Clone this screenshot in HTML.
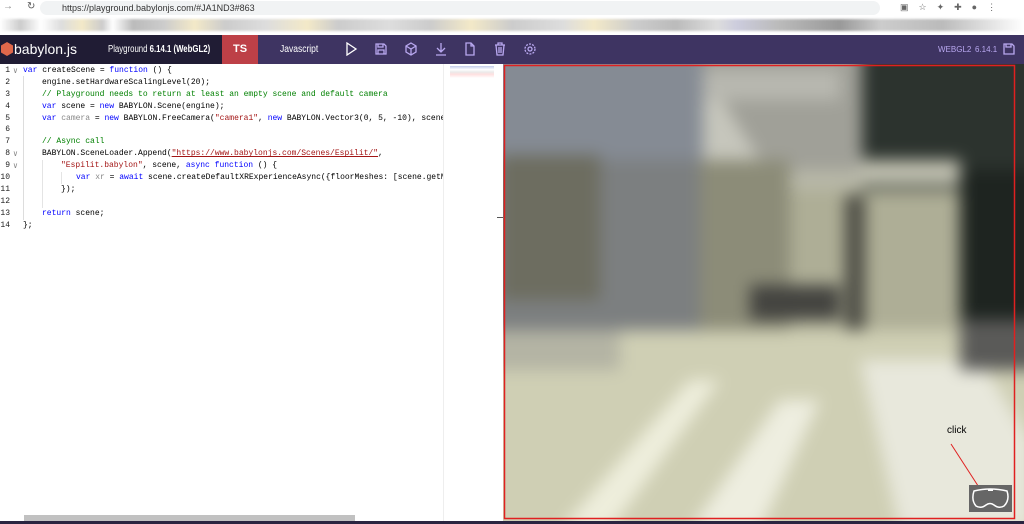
<!DOCTYPE html>
<html><head><meta charset="utf-8"><style>
*{margin:0;padding:0;box-sizing:border-box}
body{width:1024px;height:524px;overflow:hidden;background:#fff;font-family:"Liberation Sans",sans-serif;position:relative}
.abs{position:absolute}
#chrome{left:0;top:0;width:1024px;height:16px;background:#fff}
#url{left:40px;top:1px;width:840px;height:14px;background:#f1f3f4;border-radius:7px;font-size:9px;color:#333;line-height:14px;padding-left:22px}
#hdr{left:0;top:35px;width:1024px;height:29px;background:#3e3462;color:#fff;white-space:nowrap}
#hdrdark{left:0;top:0;width:222px;height:29px;background:#201c34}
#ts{left:222px;top:0;width:36px;height:29px;background:#bd4047;font-size:11px;font-weight:bold;text-align:center;line-height:29px}
.ic{position:absolute;top:7px;width:14px;height:14px}
#code{left:0;top:64px;width:497px;height:457px;background:#fff;font-family:"Liberation Mono",monospace;font-size:8px}
.row{position:relative;height:11.9px}
.ln{position:absolute;left:0;width:10px;text-align:right;color:#222;font-size:8px}
.fd{position:absolute;left:13px;color:#888}
.cl{position:absolute;left:23px;white-space:pre;color:#000}
.k{color:#0000ff}.c{color:#008000}.s{color:#a31515}.g{color:#888}
#canvas{left:503px;top:64px;width:521px;height:457px;overflow:hidden;background:#aaa}
#bottom{left:0;top:521px;width:1024px;height:3px;background:#2a2440}
</style></head><body>
<div id="chrome" class="abs">
<span class="abs" style="left:3px;top:1px;font-size:10px;color:#888">→</span>
<span class="abs" style="left:27px;top:1px;font-size:10px;color:#555">↻</span>
<div id="url" class="abs">https://playground.babylonjs.com/#JA1ND3#863</div>
<span class="abs" style="left:900px;top:2px;font-size:9px;color:#666;letter-spacing:10px">▣☆✦✚●⋮</span>
</div>
<div class="abs" style="left:0;top:19px;width:1024px;height:12px;filter:blur(1px);background:linear-gradient(90deg,#fff 0,#ccc 2%,#fff 4%,#ddd 6%,#f3e9c8 8%,#ccc 10%,#fff 11%,#bbb 13%,#ccc 16%,#f3e9c8 19%,#ccc 22%,#ddd 26%,#f3e9c8 30%,#ccc 33%,#ddd 38%,#ccc 42%,#f3e9c8 46%,#ccc 50%,#ddd 55%,#f3e9c8 58%,#ccc 62%,#bbb 66%,#ddd 70%,#ccd 72%,#bbb 76%,#999 82%,#ccc 86%,#bbb 92%,#ddd 96%,#fff 100%)"></div>
<div id="hdr" class="abs">
<div id="hdrdark" class="abs">
<div class="abs" style="left:1px;top:7px;width:12px;height:14px;background:#e0684b;clip-path:polygon(50% 0,100% 25%,100% 75%,50% 100%,0 75%,0 25%)"></div>
<span class="abs" style="left:14px;top:6px;font-size:14px">babylon.js</span>
<span class="abs" style="left:108px;top:9px;font-size:10px;transform:scaleX(0.78);transform-origin:0 0">Playground <b>6.14.1 (WebGL2)</b></span>
</div>
<div id="ts" class="abs">TS</div>
<span class="abs" style="left:280px;top:9px;font-size:10px;transform:scaleX(0.85);transform-origin:0 0">Javascript</span>
<svg class="ic" style="left:344px" viewBox="0 0 14 14"><path d="M3 1 L12 7 L3 13Z" fill="none" stroke="#fff" stroke-width="1.3"/></svg>
<svg class="ic" style="left:374px" viewBox="0 0 14 14" fill="none" stroke="#b9a8f0" stroke-width="1.3"><path d="M2 2h8l2 2v8H2z M4 2v3h5V2 M4 12V8h6v4"/></svg>
<svg class="ic" style="left:404px" viewBox="0 0 14 14" fill="none" stroke="#b9a8f0" stroke-width="1.3"><path d="M7 1l5 3v6l-5 3-5-3V4z M2 4l5 3 5-3 M7 7v6"/></svg>
<svg class="ic" style="left:434px" viewBox="0 0 14 14" fill="none" stroke="#b9a8f0" stroke-width="1.3"><path d="M7 1v9 M3 6l4 4 4-4 M2 13h10"/></svg>
<svg class="ic" style="left:463px" viewBox="0 0 14 14" fill="none" stroke="#b9a8f0" stroke-width="1.3"><path d="M3 1h5l3 3v9H3z M8 1v3h3"/></svg>
<svg class="ic" style="left:493px" viewBox="0 0 14 14" fill="none" stroke="#b9a8f0" stroke-width="1.3"><path d="M2 3h10 M5 3V1h4v2 M3 3l1 10h6l1-10 M6 5v6 M8 5v6"/></svg>
<svg class="ic" style="left:523px" viewBox="0 0 14 14" fill="none" stroke="#b9a8f0" stroke-width="1.3"><circle cx="7" cy="7" r="2"/><circle cx="7" cy="7" r="5" stroke-dasharray="2 1.2"/></svg>
<span class="abs" style="left:938px;top:10px;font-size:8px;color:#b9a8f0">WEBGL2</span>
<span class="abs" style="left:975px;top:10px;font-size:8px;color:#b9a8f0">6.14.1</span>
<svg class="ic" style="left:1002px" viewBox="0 0 14 14" fill="none" stroke="#b9a8f0" stroke-width="1.3"><path d="M2 2h8l2 2v8H2z M4 2v3h5V2"/></svg>
</div>
<div id="code" class="abs">
<div class="abs" style="left:23px;top:12px;width:1px;height:144px;background:#ddd"></div>
<div class="abs" style="left:42px;top:96px;width:1px;height:48px;background:#e4e4e4"></div>
<div class="abs" style="left:61px;top:108px;width:1px;height:12px;background:#e4e4e4"></div>
<div class="abs" style="left:443px;top:0;width:1px;height:457px;background:#eee"></div>
<div class="abs" style="left:450px;top:2px;width:44px;height:12px;background:linear-gradient(#9ad 0,#fff 30%,#ddd 50%,#fcc 70%,#fff 100%);opacity:.6"></div>
<div class="abs" style="left:24px;top:451px;width:331px;height:6px;background:#c1c1c1"></div>
<div class="abs" style="left:497px;top:153px;width:6px;height:1px;background:#555"></div>
<div style="position:absolute;top:2px;left:0;width:443px;overflow:hidden">
<div class="row"><span class="ln">1</span><span class="fd">∨</span><span class="cl"><span class="k">var</span> createScene = <span class="k">function</span> () {</span></div>
<div class="row"><span class="ln">2</span><span class="cl" style="left:42px">engine.setHardwareScalingLevel(20);</span></div>
<div class="row"><span class="ln">3</span><span class="cl c" style="left:42px">// Playground needs to return at least an empty scene and default camera</span></div>
<div class="row"><span class="ln">4</span><span class="cl" style="left:42px"><span class="k">var</span> scene = <span class="k">new</span> BABYLON.Scene(engine);</span></div>
<div class="row"><span class="ln">5</span><span class="cl" style="left:42px"><span class="k">var</span> <span class="g">camera</span> = <span class="k">new</span> BABYLON.FreeCamera(<span class="s">"camera1"</span>, <span class="k">new</span> BABYLON.Vector3(0, 5, -10), scene</span></div>
<div class="row"><span class="ln">6</span></div>
<div class="row"><span class="ln">7</span><span class="cl c" style="left:42px">// Async call</span></div>
<div class="row"><span class="ln">8</span><span class="fd">∨</span><span class="cl" style="left:42px">BABYLON.SceneLoader.Append(<span class="s" style="text-decoration:underline">"https://www.babylonjs.com/Scenes/Espilit/"</span>,</span></div>
<div class="row"><span class="ln">9</span><span class="fd">∨</span><span class="cl" style="left:61px"><span class="s">"Espilit.babylon"</span>, scene, <span class="k">async function</span> () {</span></div>
<div class="row"><span class="ln">10</span><span class="cl" style="left:76px"><span class="k">var</span> <span class="g">xr</span> = <span class="k">await</span> scene.createDefaultXRExperienceAsync({floorMeshes: [scene.getMe</span></div>
<div class="row"><span class="ln">11</span><span class="cl" style="left:61px">});</span></div>
<div class="row"><span class="ln">12</span></div>
<div class="row"><span class="ln">13</span><span class="cl" style="left:42px"><span class="k">return</span> scene;</span></div>
<div class="row"><span class="ln">14</span><span class="cl">};</span></div>
</div>
</div>
<div id="canvas" class="abs">
<div style="position:absolute;left:-20px;top:-20px;width:561px;height:497px;filter:blur(8px)">
<svg width="561" height="497" viewBox="483 44 561 497" style="display:block">
<rect x="483" y="44" width="561" height="497" fill="#b8b8a8"/>
<rect x="483" y="44" width="390" height="126" fill="#a0a098"/>
<path d="M520 65 L700 65 L760 160 L700 160Z" fill="#c6c6bc"/>
<rect x="640" y="70" width="200" height="30" fill="#b8b8b0"/>
<rect x="862" y="44" width="182" height="146" fill="#2c332e"/>
<rect x="960" y="170" width="84" height="170" fill="#1e2420"/>
<rect x="483" y="44" width="220" height="120" fill="#858b94"/>
<rect x="483" y="160" width="227" height="180" fill="#7c7f80"/>
<rect x="500" y="155" width="100" height="145" fill="#6d6d60"/>
<rect x="700" y="160" width="90" height="185" fill="#8c8c78"/>
<rect x="790" y="190" width="170" height="150" fill="#aeae96"/>
<rect x="845" y="195" width="20" height="140" fill="#4c4c44"/>
<rect x="750" y="285" width="90" height="35" fill="#444440"/>
<rect x="860" y="160" width="100" height="25" fill="#c0c0b0"/>
<path d="M483 330 L1044 330 L1044 541 L483 541Z" fill="#cfcfb4"/>
<path d="M560 530 L690 380 L720 380 L610 530Z" fill="#eeeedc"/>
<path d="M690 530 L780 400 L820 400 L760 530Z" fill="#eeeee0"/>
<path d="M860 360 L980 360 L1030 440 L1030 530 L900 530Z" fill="#e8e8dc"/>
<rect x="483" y="330" width="137" height="40" fill="#b4b4a4"/>
<rect x="960" y="320" width="84" height="50" fill="#5a5a58"/>
</svg>
</div>
<svg width="521" height="457" viewBox="503 64 521 457" style="position:absolute;left:0;top:0">
<rect x="504.5" y="65.5" width="510" height="453" fill="none" stroke="#e02020" stroke-width="1.5"/>
<text x="947" y="433" font-family="Liberation Sans" font-size="10" fill="#000">click</text>
<line x1="951" y1="444" x2="982" y2="492" stroke="#e02020" stroke-width="1"/>
<rect x="969" y="485" width="43" height="27" fill="#666"/>
<path d="M974 491 Q990 487 1007 491 Q1010 500 1004 506 Q999 509 994 505 Q990 502 986 505 Q981 509 976 506 Q971 500 974 491Z" fill="none" stroke="#fff" stroke-width="1.5"/>
<rect x="988" y="489" width="5" height="2" fill="#fff"/>
</svg>
</div>
<div id="bottom" class="abs"></div>
</body></html>
